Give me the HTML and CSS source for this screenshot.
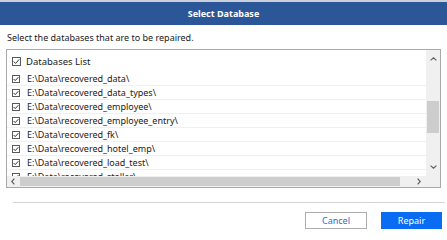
FILE: index.html
```html
<!DOCTYPE html>
<html>
<head>
<meta charset="utf-8">
<title>Select Database</title>
<link rel="stylesheet" href="styles.css">
</head>
<body>
<div class="window">
  <div class="titlebar">Select Database</div>
  <div class="content">
    <p class="prompt">Select the databases that are to be repaired.</p>
    <div class="listbox">
      <div class="viewport">
        <div class="row head">
          <svg class="cb cb-lg" viewBox="0 0 9 9"><rect x="0.5" y="0.5" width="8" height="8" fill="#fff" stroke="#5a5a5a"/><polyline points="1.8,4.6 3.6,6.4 7.2,2.4" fill="none" stroke="#333" stroke-width="1"/></svg>
          <span>Databases List</span>
        </div>
        <div class="row item"><svg class="cb" viewBox="0 0 8 8"><rect x="0.5" y="0.5" width="7" height="7" fill="#fff" stroke="#5a5a5a"/><polyline points="1.6,4 3.2,5.6 6.4,2.2" fill="none" stroke="#333" stroke-width="1"/></svg><span>E:\Data\recovered_data\</span></div>
        <div class="row item"><svg class="cb" viewBox="0 0 8 8"><rect x="0.5" y="0.5" width="7" height="7" fill="#fff" stroke="#5a5a5a"/><polyline points="1.6,4 3.2,5.6 6.4,2.2" fill="none" stroke="#333" stroke-width="1"/></svg><span>E:\Data\recovered_data_types\</span></div>
        <div class="row item"><svg class="cb" viewBox="0 0 8 8"><rect x="0.5" y="0.5" width="7" height="7" fill="#fff" stroke="#5a5a5a"/><polyline points="1.6,4 3.2,5.6 6.4,2.2" fill="none" stroke="#333" stroke-width="1"/></svg><span>E:\Data\recovered_employee\</span></div>
        <div class="row item"><svg class="cb" viewBox="0 0 8 8"><rect x="0.5" y="0.5" width="7" height="7" fill="#fff" stroke="#5a5a5a"/><polyline points="1.6,4 3.2,5.6 6.4,2.2" fill="none" stroke="#333" stroke-width="1"/></svg><span>E:\Data\recovered_employee_entry\</span></div>
        <div class="row item"><svg class="cb" viewBox="0 0 8 8"><rect x="0.5" y="0.5" width="7" height="7" fill="#fff" stroke="#5a5a5a"/><polyline points="1.6,4 3.2,5.6 6.4,2.2" fill="none" stroke="#333" stroke-width="1"/></svg><span>E:\Data\recovered_fk\</span></div>
        <div class="row item"><svg class="cb" viewBox="0 0 8 8"><rect x="0.5" y="0.5" width="7" height="7" fill="#fff" stroke="#5a5a5a"/><polyline points="1.6,4 3.2,5.6 6.4,2.2" fill="none" stroke="#333" stroke-width="1"/></svg><span>E:\Data\recovered_hotel_emp\</span></div>
        <div class="row item"><svg class="cb" viewBox="0 0 8 8"><rect x="0.5" y="0.5" width="7" height="7" fill="#fff" stroke="#5a5a5a"/><polyline points="1.6,4 3.2,5.6 6.4,2.2" fill="none" stroke="#333" stroke-width="1"/></svg><span>E:\Data\recovered_load_test\</span></div>
        <div class="row item"><svg class="cb" viewBox="0 0 8 8"><rect x="0.5" y="0.5" width="7" height="7" fill="#fff" stroke="#5a5a5a"/><polyline points="1.6,4 3.2,5.6 6.4,2.2" fill="none" stroke="#333" stroke-width="1"/></svg><span>E:\Data\recovered_stellar\</span></div>
      </div>
      <div class="vscroll">
        <div class="varrow"><svg viewBox="0 0 7 4" class="chev-v"><polyline points="0.6,3.4 3.5,0.8 6.4,3.4" fill="none" stroke="#606060" stroke-width="1.2"/></svg></div>
        <div class="vtrack"><div class="vthumb"></div></div>
        <div class="varrow"><svg viewBox="0 0 7 4" class="chev-v"><polyline points="0.6,0.6 3.5,3.2 6.4,0.6" fill="none" stroke="#606060" stroke-width="1.2"/></svg></div>
      </div>
      <div class="hscroll">
        <div class="harrow left"><svg viewBox="0 0 4 7" class="chev-h"><polyline points="3.4,0.6 0.8,3.5 3.4,6.4" fill="none" stroke="#606060" stroke-width="1.2"/></svg></div>
        <div class="htrack"><div class="hthumb"></div></div>
        <div class="harrow right"><svg viewBox="0 0 4 7" class="chev-h"><polyline points="0.6,0.6 3.2,3.5 0.6,6.4" fill="none" stroke="#606060" stroke-width="1.2"/></svg></div>
      </div>
      <div class="corner"></div>
    </div>
  </div>
  <div class="footer">
    <div class="sep"></div>
    <div class="buttons">
      <button class="btn cancel">Cancel</button>
      <button class="btn repair">Repair</button>
    </div>
  </div>
</div>
</body>
</html>
```

FILE: styles.css
```css
* { box-sizing: border-box; }
html, body { margin: 0; padding: 0; background: #fff; }
body {
  width: 447px;
  height: 235px;
  overflow: hidden;
  font-family: "Noto Sans", "Open Sans", sans-serif;
  color: #1a1a1a;
}
.window {
  width: 447px;
  height: 235px;
  border-top: 2px solid #c9d0dc;
  background: #fff;
}
.titlebar {
  height: 23px;
  background: #2b5698;
  color: #fff;
  font-size: 9px;
  font-weight: 700;
  display: flex;
  align-items: center;
  justify-content: center;
}
.content {
  padding: 0 6px;
}
.prompt {
  margin: 0;
  height: 24px;
  display: flex;
  align-items: center;
  padding-left: 1px;
  font-size: 9px;
}
.listbox {
  width: 435px;
  height: 139px;
  border: 1px solid #a9a9a9;
  display: grid;
  grid-template-columns: 1fr 14px;
  grid-template-rows: 1fr 11px;
}
.viewport {
  overflow: hidden;
  font-size: 9px;
  padding-top: 1px;
}
.row {
  display: flex;
  align-items: center;
  padding-left: 5px;
}
.row.head {
  height: 21px;
  gap: 5px;
  font-size: 9.5px;
}
.row.item {
  height: 14px;
  gap: 7px;
  border-bottom: 1px solid #f0f0f0;
}
.cb { width: 8px; height: 8px; flex: none; }
.cb-lg { width: 9px; height: 9px; }
.vscroll {
  background: #f0f0f0;
  display: flex;
  flex-direction: column;
}
.varrow {
  height: 18px;
  display: flex;
  align-items: center;
  justify-content: center;
}
.chev-v { width: 7px; height: 4px; }
.chev-h { width: 4px; height: 7px; }
.vtrack {
  flex: 1;
  padding-top: 33px;
}
.vthumb {
  height: 32px;
  margin: 0 1px;
  background: #cdcdcd;
}
.hscroll {
  background: #f0f0f0;
  display: flex;
}
.harrow {
  display: flex;
  align-items: center;
  justify-content: center;
}
.harrow.left { width: 12px; }
.harrow.right { width: 15px; }
.htrack {
  flex: 1;
  padding: 1px 0 1px 1px;
}
.hthumb {
  width: 380px;
  height: 100%;
  background: #cdcdcd;
}
.corner { background: #f0f0f0; }
.footer {
  padding-top: 14px;
}
.sep {
  height: 1px;
  margin: 0 2px 0 13px;
  background: #d4d4d4;
}
.buttons {
  display: flex;
  justify-content: flex-end;
  gap: 14px;
  padding: 9px 5px 0 0;
}
.btn {
  height: 17px;
  font-family: "Noto Sans", "Open Sans", sans-serif;
  font-size: 9px;
  padding: 0;
  margin: 0;
  display: flex;
  align-items: center;
  justify-content: center;
}
.cancel {
  width: 62px;
  background: #fff;
  border: 1px solid #adadad;
  color: #1e6fd9;
}
.repair {
  width: 61px;
  background: #0a6cf2;
  border: 1px solid #0a6cf2;
  color: #fff;
}
```
